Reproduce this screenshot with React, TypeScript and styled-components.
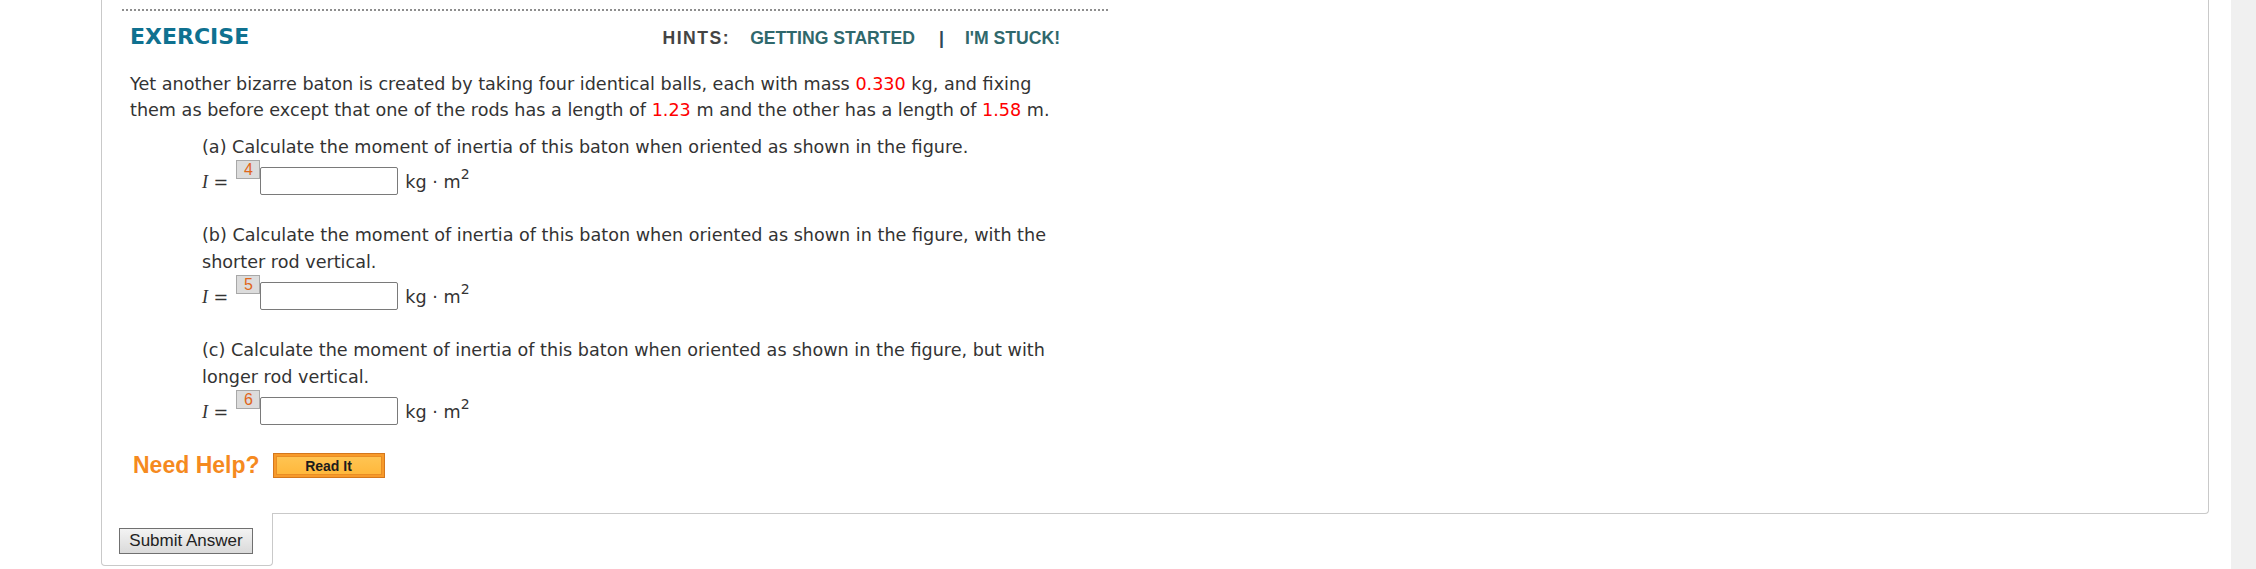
import styled, { createGlobalStyle } from "styled-components";

const GlobalStyle = createGlobalStyle`
  html, body {
    margin: 0;
    padding: 0;
    background: #fff;
  }
  body {
    font-family: "DejaVu Sans", Verdana, sans-serif;
    color: #333;
  }
`;

const questions = [
  {
    label: "(a)",
    text: "Calculate the moment of inertia of this baton when oriented as shown in the figure.",
    badge: 4,
  },
  {
    label: "(b)",
    text: "Calculate the moment of inertia of this baton when oriented as shown in the figure, with the shorter rod vertical.",
    badge: 5,
  },
  {
    label: "(c)",
    text: "Calculate the moment of inertia of this baton when oriented as shown in the figure, but with longer rod vertical.",
    badge: 6,
  },
];

export default function App() {
  return (
    <Page>
      <GlobalStyle />
      <Main>
        <Panel>
          <Exercise>
            <Header>
              <Title>EXERCISE</Title>
              <Hints>
                <HintLabel>HINTS:</HintLabel>
                <HintLink>GETTING STARTED</HintLink>
                <Pipe>|</Pipe>
                <HintLink>I'M STUCK!</HintLink>
              </Hints>
            </Header>
            <Problem>
              Yet another bizarre baton is created by taking four identical balls, each with mass{" "}
              <Value>0.330</Value> kg, and fixing them as before except that one of the rods has a
              length of <Value>1.23</Value> m and the other has a length of <Value>1.58</Value> m.
            </Problem>
            {questions.map((q, i) => (
              <Question key={q.label} first={i === 0}>
                <QuestionText>
                  {q.label} {q.text}
                </QuestionText>
                <AnswerRow>
                  <Symbol>
                    <Var>I</Var> =
                  </Symbol>
                  <InputGroup>
                    <Badge>{q.badge}</Badge>
                    <AnswerInput type="text" />
                  </InputGroup>
                  <Unit>
                    kg · m<Sup>2</Sup>
                  </Unit>
                </AnswerRow>
              </Question>
            ))}
            <HelpRow>
              <NeedHelp>Need Help?</NeedHelp>
              <ReadIt>
                <ReadItInner>Read It</ReadItInner>
              </ReadIt>
            </HelpRow>
          </Exercise>
        </Panel>
        <Tab>
          <SubmitButton>Submit Answer</SubmitButton>
        </Tab>
      </Main>
      <Scrollbar />
    </Page>
  );
}

const Page = styled.div`
  display: flex;
  min-height: 569px;
`;
const Main = styled.div`
  flex: 1;
  padding: 0 22px 0 101px;
`;
const Panel = styled.div`
  border: 1px solid #c9c9c9;
  border-top: none;
  border-bottom-right-radius: 4px;
  padding: 9px 0 35px 20px;
`;
const Exercise = styled.div`
  width: 949px;
  padding: 0 29px 0 8px;
  border-top: 2px dotted #8e8e8e;
  font-size: 17.6px;
`;
const Header = styled.div`
  display: flex;
  align-items: baseline;
  justify-content: space-between;
  margin-top: 13px;
  padding-right: 19px;
  line-height: 26px;
`;
const Title = styled.div`
  font-family: "DejaVu Sans", Verdana, sans-serif;
  font-weight: bold;
  font-size: 22px;
  color: #0f7190;
`;
const Hints = styled.div`
  display: flex;
  align-items: baseline;
  font-family: "Liberation Sans", Arial, sans-serif;
  font-weight: bold;
  font-size: 17.6px;
`;
const HintLabel = styled.span`
  color: #444;
  letter-spacing: 1.5px;
  margin-right: 20px;
`;
const HintLink = styled.span`
  color: #2f686c;
`;
const Pipe = styled.span`
  color: #2c4858;
  margin: 0 21px 0 24px;
`;
const Problem = styled.p`
  margin: 20px 0 0;
  line-height: 26px;
`;
const Value = styled.span`
  color: #f00;
`;
const Question = styled.div<{ first?: boolean }>`
  margin: ${(p) => (p.first ? "11px" : "27px")} 0 0 72px;
`;
const QuestionText = styled.p`
  margin: 0;
  line-height: 27px;
`;
const AnswerRow = styled.div`
  display: flex;
  align-items: flex-end;
  margin-top: -1px;
  line-height: 26px;
`;
const Symbol = styled.span`
  margin-right: 8px;
`;
const Var = styled.span`
  font-family: "Liberation Serif", "Times New Roman", serif;
  font-style: italic;
  font-size: 18px;
`;
const InputGroup = styled.div`
  display: flex;
  align-items: flex-start;
  height: 35px;
`;
const Badge = styled.div`
  box-sizing: border-box;
  width: 24px;
  height: 19px;
  background: #dcdcdc;
  border: 1px solid #a8a8a8;
  color: #e0661a;
  font-family: "Liberation Sans", Arial, sans-serif;
  font-size: 16px;
  line-height: 17px;
  text-align: center;
`;
const AnswerInput = styled.input`
  box-sizing: border-box;
  width: 138px;
  height: 28px;
  margin: 7px 0 0;
  border: 1px solid #7a7a7a;
  border-radius: 2px;
  background: #fff;
  padding: 0 4px;
`;
const Unit = styled.span`
  margin-left: 7px;
`;
const Sup = styled.sup`
  font-size: 14px;
  line-height: 0;
  vertical-align: 9px;
`;
const HelpRow = styled.div`
  display: flex;
  align-items: center;
  margin-top: 28px;
`;
const NeedHelp = styled.span`
  font-family: "Liberation Sans", Arial, sans-serif;
  font-weight: bold;
  font-size: 23px;
  color: #f58a1f;
  margin: 0 13px 0 3px;
  line-height: 25px;
`;
const ReadIt = styled.div`
  box-sizing: border-box;
  display: flex;
  width: 112px;
  height: 25px;
  padding: 2px;
  border: 1px solid #d4771c;
  background: #f79a2a;
`;
const ReadItInner = styled.div`
  flex: 1;
  display: flex;
  align-items: center;
  justify-content: center;
  border: 1px solid #e98d24;
  background: linear-gradient(#ffc452, #ffb83c);
  font-family: "Liberation Sans", Arial, sans-serif;
  font-weight: bold;
  font-size: 14px;
  color: #1c1c1c;
`;
const Tab = styled.div`
  box-sizing: border-box;
  width: 172px;
  height: 53px;
  margin-top: -1px;
  padding: 15px 0 0 17px;
  background: #fff;
  border: 1px solid #c9c9c9;
  border-top: none;
  border-radius: 0 0 4px 4px;
`;
const SubmitButton = styled.button`
  box-sizing: border-box;
  width: 134px;
  height: 26px;
  padding: 0;
  border: 1px solid #707070;
  background: linear-gradient(#f3f3f3, #dadada);
  font-family: "Liberation Sans", Arial, sans-serif;
  font-size: 17px;
  color: #222;
`;
const Scrollbar = styled.div`
  width: 25px;
  background: #f0f0f0;
`;
